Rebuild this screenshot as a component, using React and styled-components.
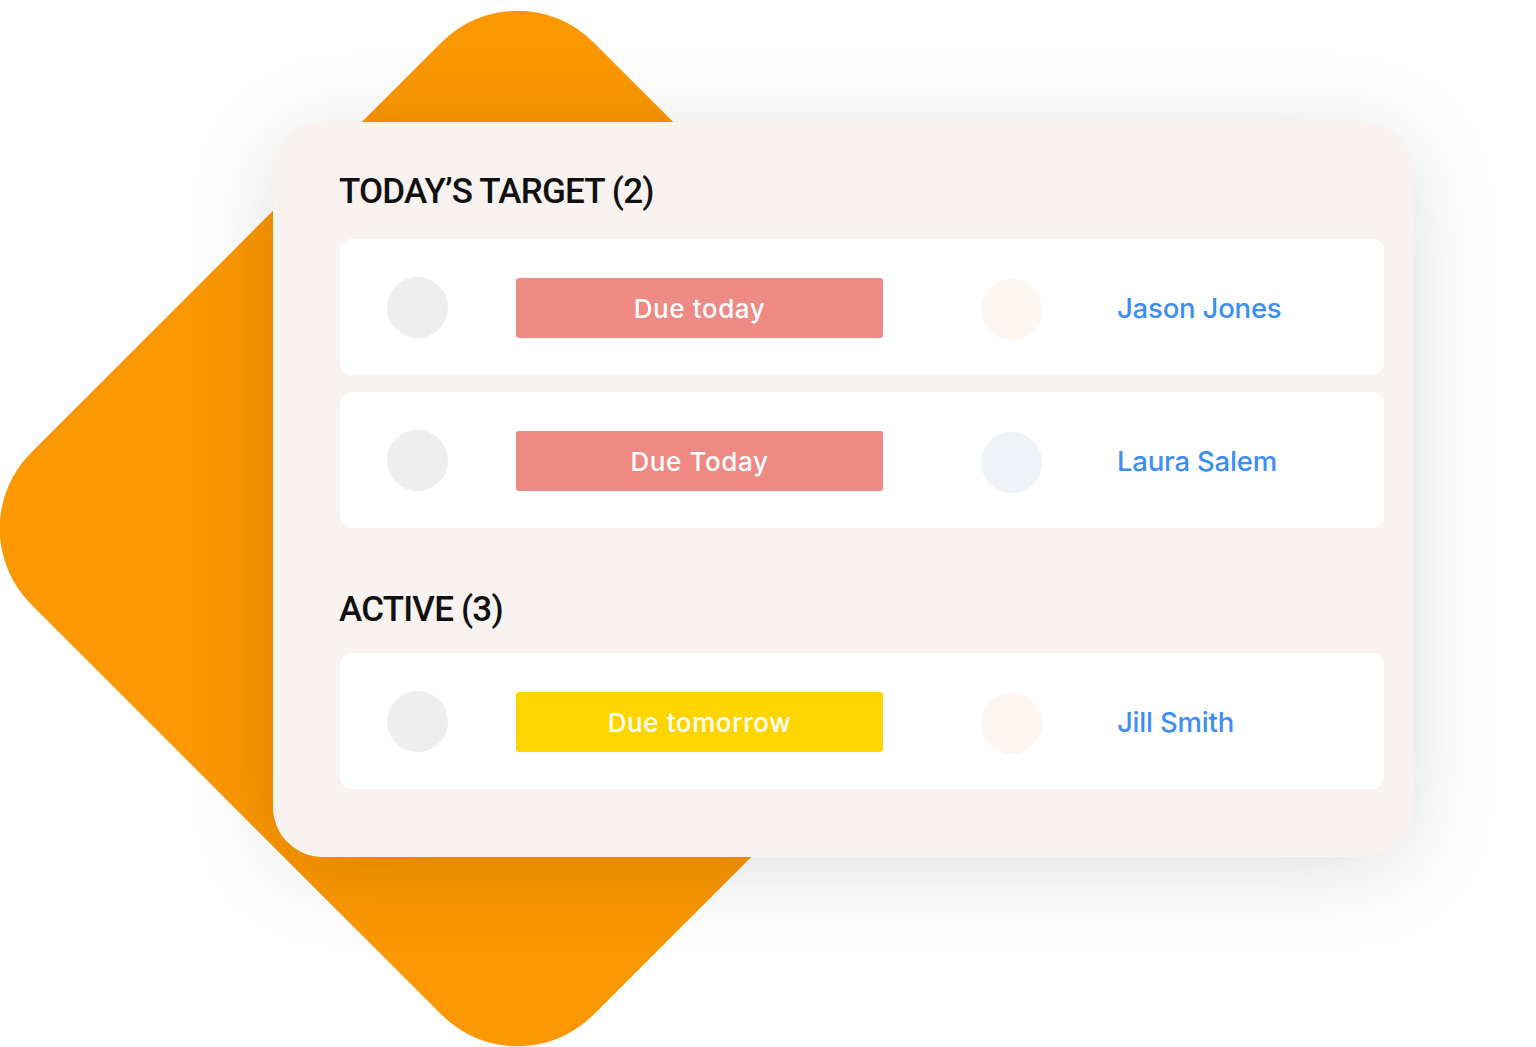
import React from "react";
import styled, { createGlobalStyle } from "styled-components";

const GlobalStyle = createGlobalStyle`
  html, body {
    margin: 0;
    padding: 0;
    background: #ffffff;
  }
  body {
    font-family: Inter, "Noto Sans", "Liberation Sans", sans-serif;
  }
`;

const Stage = styled.div`
  position: relative;
  width: 1536px;
  height: 1047px;
  overflow: hidden;
  padding: 122px 0 0 273px;
  box-sizing: border-box;
`;

// decorative rounded diamond behind the card
const Diamond = styled.div`
  position: absolute;
  left: 120px;
  top: 131px;
  width: 795px;
  height: 795px;
  border-radius: 107px;
  background: #fb9700;
  transform: rotate(45deg);
`;

const Card = styled.div`
  position: relative;
  width: 1140px;
  height: 735px;
  box-sizing: border-box;
  padding: 52px 29px 0 66px;
  border-radius: 50px;
  background: #f8f3f0;
  box-shadow: 0 12px 90px rgba(0, 0, 0, 0.13);
`;

const SectionHead = styled.h2`
  margin: 0 0 ${(p) => p.gap}px;
  margin-top: ${(p) => p.top || 0}px;
  font-family: Roboto, "Liberation Sans", sans-serif;
  font-size: 35px;
  line-height: 35px;
  font-weight: 500;
  color: #111111;
  letter-spacing: -0.8px;
`;

const List = styled.div`
  display: flex;
  flex-direction: column;
  gap: 17px;
`;

const Row = styled.div`
  display: flex;
  align-items: center;
  height: 136px;
  box-sizing: border-box;
  padding-left: 47px;
  margin-left: 1px;
  background: #ffffff;
  border-radius: 12px;
`;

const Dot = styled.div`
  flex: none;
  width: 61px;
  height: 61px;
  border-radius: 50%;
  background: ${(p) => p.color};
  margin-top: ${(p) => p.shift || 0}px;
`;

const Badge = styled.div`
  flex: none;
  display: flex;
  align-items: center;
  justify-content: center;
  width: 367px;
  height: 60px;
  margin: 2px 98px 0 68px;
  border-radius: 3px;
  background: ${(p) => p.color};
  color: #ffffff;
  font-size: 26px;
  font-weight: 500;
  letter-spacing: 0.6px;
`;

const Name = styled.span`
  margin-left: 75px;
  margin-top: 2px;
  font-size: 27.5px;
  font-weight: 500;
  letter-spacing: -0.2px;
  color: #3a8ef6;
`;

const rowsToday = [
  { due: "Due today", color: "#ef8984", avatar: "#fdf7f1", name: "Jason Jones" },
  { due: "Due Today", color: "#ef8984", avatar: "#eff2f7", name: "Laura Salem" },
];

const rowsActive = [
  { due: "Due tomorrow", color: "#ffd500", avatar: "#fdf6f0", name: "Jill Smith" },
];

const TaskRow = ({ task }) => (
  <Row>
    <Dot color="#eeeeee" />
    <Badge color={task.color}>{task.due}</Badge>
    <Dot color={task.avatar} shift={5} />
    <Name>{task.name}</Name>
  </Row>
);

const App = () => {
  return (
    <>
      <GlobalStyle />
      <Stage>
        <Diamond />
        <Card>
          <SectionHead gap={30}>TODAY’S TARGET (2)</SectionHead>
          <List>
            {rowsToday.map((task) => (
              <TaskRow key={task.name} task={task} />
            ))}
          </List>
          <SectionHead top={64} gap={26}>
            ACTIVE (3)
          </SectionHead>
          <List>
            {rowsActive.map((task) => (
              <TaskRow key={task.name} task={task} />
            ))}
          </List>
        </Card>
      </Stage>
    </>
  );
};

export default App;
